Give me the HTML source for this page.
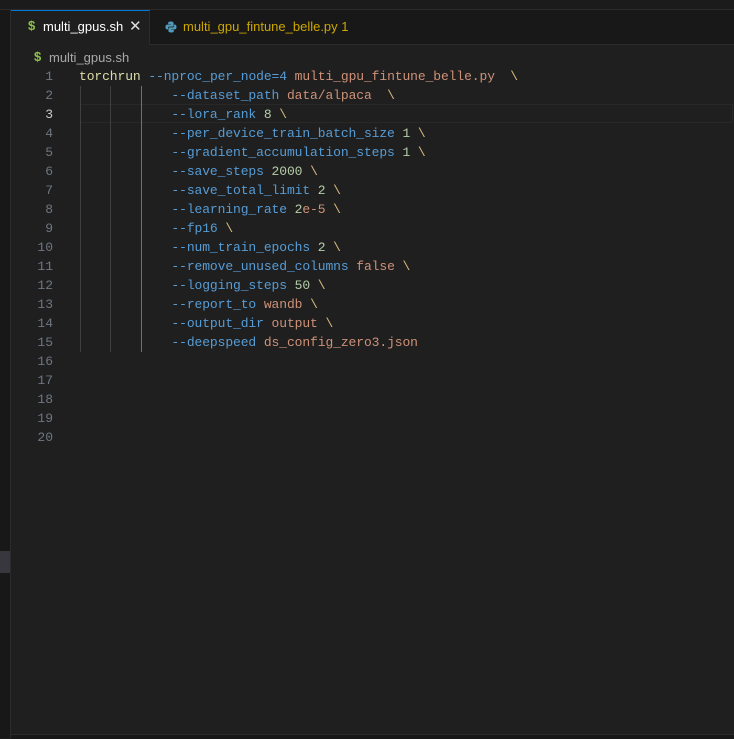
<!DOCTYPE html>
<html><head><style>
body{margin:0;width:734px;height:738px;background:#1f1f1f;overflow:hidden;position:relative;font-family:"Liberation Sans",sans-serif}
.abs{position:absolute}
.code{font-family:"Liberation Mono",monospace;font-size:13px;letter-spacing:-0.1px;line-height:19px;white-space:pre}
.ln{position:absolute;left:20px;width:33px;text-align:right;color:#6e7681;font-family:"Liberation Mono",monospace;font-size:13px;line-height:19px}
.f{color:#dcdcaa}.o{color:#569cd6}.s{color:#ce9178}.n{color:#b5cea8}.b{color:#d7ba7d}
</style></head><body>
<div class="abs" style="left:0;top:0;width:734px;height:9px;background:#1b1b1b;border-bottom:1px solid #2b2b2b"></div>
<div class="abs" style="left:0;top:10px;width:10px;height:728px;background:#181818;border-right:1px solid #2b2b2b"></div>
<div class="abs" style="left:0;top:551px;width:10px;height:22px;background:#37373d"></div>
<div class="abs" style="left:11px;top:10px;width:723px;height:34px;background:#181818;border-bottom:1px solid #2b2b2b"></div>
<div class="abs" style="left:11px;top:10px;width:139px;height:35px;background:#1f1f1f;border-top:1px solid #0078d4;box-sizing:border-box;border-right:1px solid #2b2b2b"></div>
<div class="abs" style="left:28px;top:18px;font-size:13px;color:#8dc149;font-weight:bold">$</div>
<div class="abs" style="left:43px;top:19px;font-size:13px;color:#fff">multi_gpus.sh</div>
<div class="abs" style="left:129px;top:17px;font-size:15px;color:#ddd">✕</div>
<svg class="abs" style="left:165px;top:21px" width="12" height="12" viewBox="0 0 12 12"><path d="M6 0.5C3 0.5 3.2 1.8 3.2 1.8V3.2H6.1V3.6H2C0.5 3.6 0.5 6 0.5 6S0.4 8.4 2 8.4H3V7C3 5.6 4.2 5.6 4.2 5.6H7.3C8.6 5.6 8.6 4.4 8.6 4.4V2C8.6 0.5 6 0.5 6 0.5Z" fill="#519aba"/><path d="M6 11.5C9 11.5 8.8 10.2 8.8 10.2V8.8H5.9V8.4H10C11.5 8.4 11.5 6 11.5 6S11.6 3.6 10 3.6H9V5C9 6.4 7.8 6.4 7.8 6.4H4.7C3.4 6.4 3.4 7.6 3.4 7.6V10C3.4 11.5 6 11.5 6 11.5Z" fill="#519aba"/></svg>
<div class="abs" style="left:183px;top:19px;font-size:13px;color:#cca700">multi_gpu_fintune_belle.py 1</div>
<div class="abs" style="left:34px;top:49px;font-size:13px;color:#8dc149;font-weight:bold">$</div>
<div class="abs" style="left:49px;top:50px;font-size:13px;color:#a9a9a9">multi_gpus.sh</div>
<div class="abs" style="left:80px;top:104px;width:653px;height:19px;border:1px solid #282828;box-sizing:border-box"></div>
<div class="abs" style="left:80px;top:86px;width:1px;height:266px;background:#404040"></div>
<div class="abs" style="left:110px;top:86px;width:1px;height:266px;background:#404040"></div>
<div class="abs" style="left:141px;top:86px;width:1px;height:266px;background:#707070"></div>
<div class="ln" style="top:67px">1<br>2<br><span style="color:#ccc">3</span><br>4<br>5<br>6<br>7<br>8<br>9<br>10<br>11<br>12<br>13<br>14<br>15<br>16<br>17<br>18<br>19<br>20</div>
<div class="abs code" style="left:79px;top:67px;color:#ccc"><span class="f">torchrun</span> <span class="o">--nproc_per_node=4</span> <span class="s">multi_gpu_fintune_belle.py</span>  <span class="b">\</span>
            <span class="o">--dataset_path</span> <span class="s">data/alpaca</span>  <span class="b">\</span>
            <span class="o">--lora_rank</span> <span class="n">8</span> <span class="b">\</span>
            <span class="o">--per_device_train_batch_size</span> <span class="n">1</span> <span class="b">\</span>
            <span class="o">--gradient_accumulation_steps</span> <span class="n">1</span> <span class="b">\</span>
            <span class="o">--save_steps</span> <span class="n">2000</span> <span class="b">\</span>
            <span class="o">--save_total_limit</span> <span class="n">2</span> <span class="b">\</span>
            <span class="o">--learning_rate</span> <span class="n">2</span><span class="s">e-5</span> <span class="b">\</span>
            <span class="o">--fp16</span> <span class="b">\</span>
            <span class="o">--num_train_epochs</span> <span class="n">2</span> <span class="b">\</span>
            <span class="o">--remove_unused_columns</span> <span class="s">false</span> <span class="b">\</span>
            <span class="o">--logging_steps</span> <span class="n">50</span> <span class="b">\</span>
            <span class="o">--report_to</span> <span class="s">wandb</span> <span class="b">\</span>
            <span class="o">--output_dir</span> <span class="s">output</span> <span class="b">\</span>
            <span class="o">--deepspeed</span> <span class="s">ds_config_zero3.json</span></div>
<div class="abs" style="left:11px;top:734px;width:723px;height:4px;background:#181818;border-top:1px solid #2b2b2b"></div>
</body></html>
